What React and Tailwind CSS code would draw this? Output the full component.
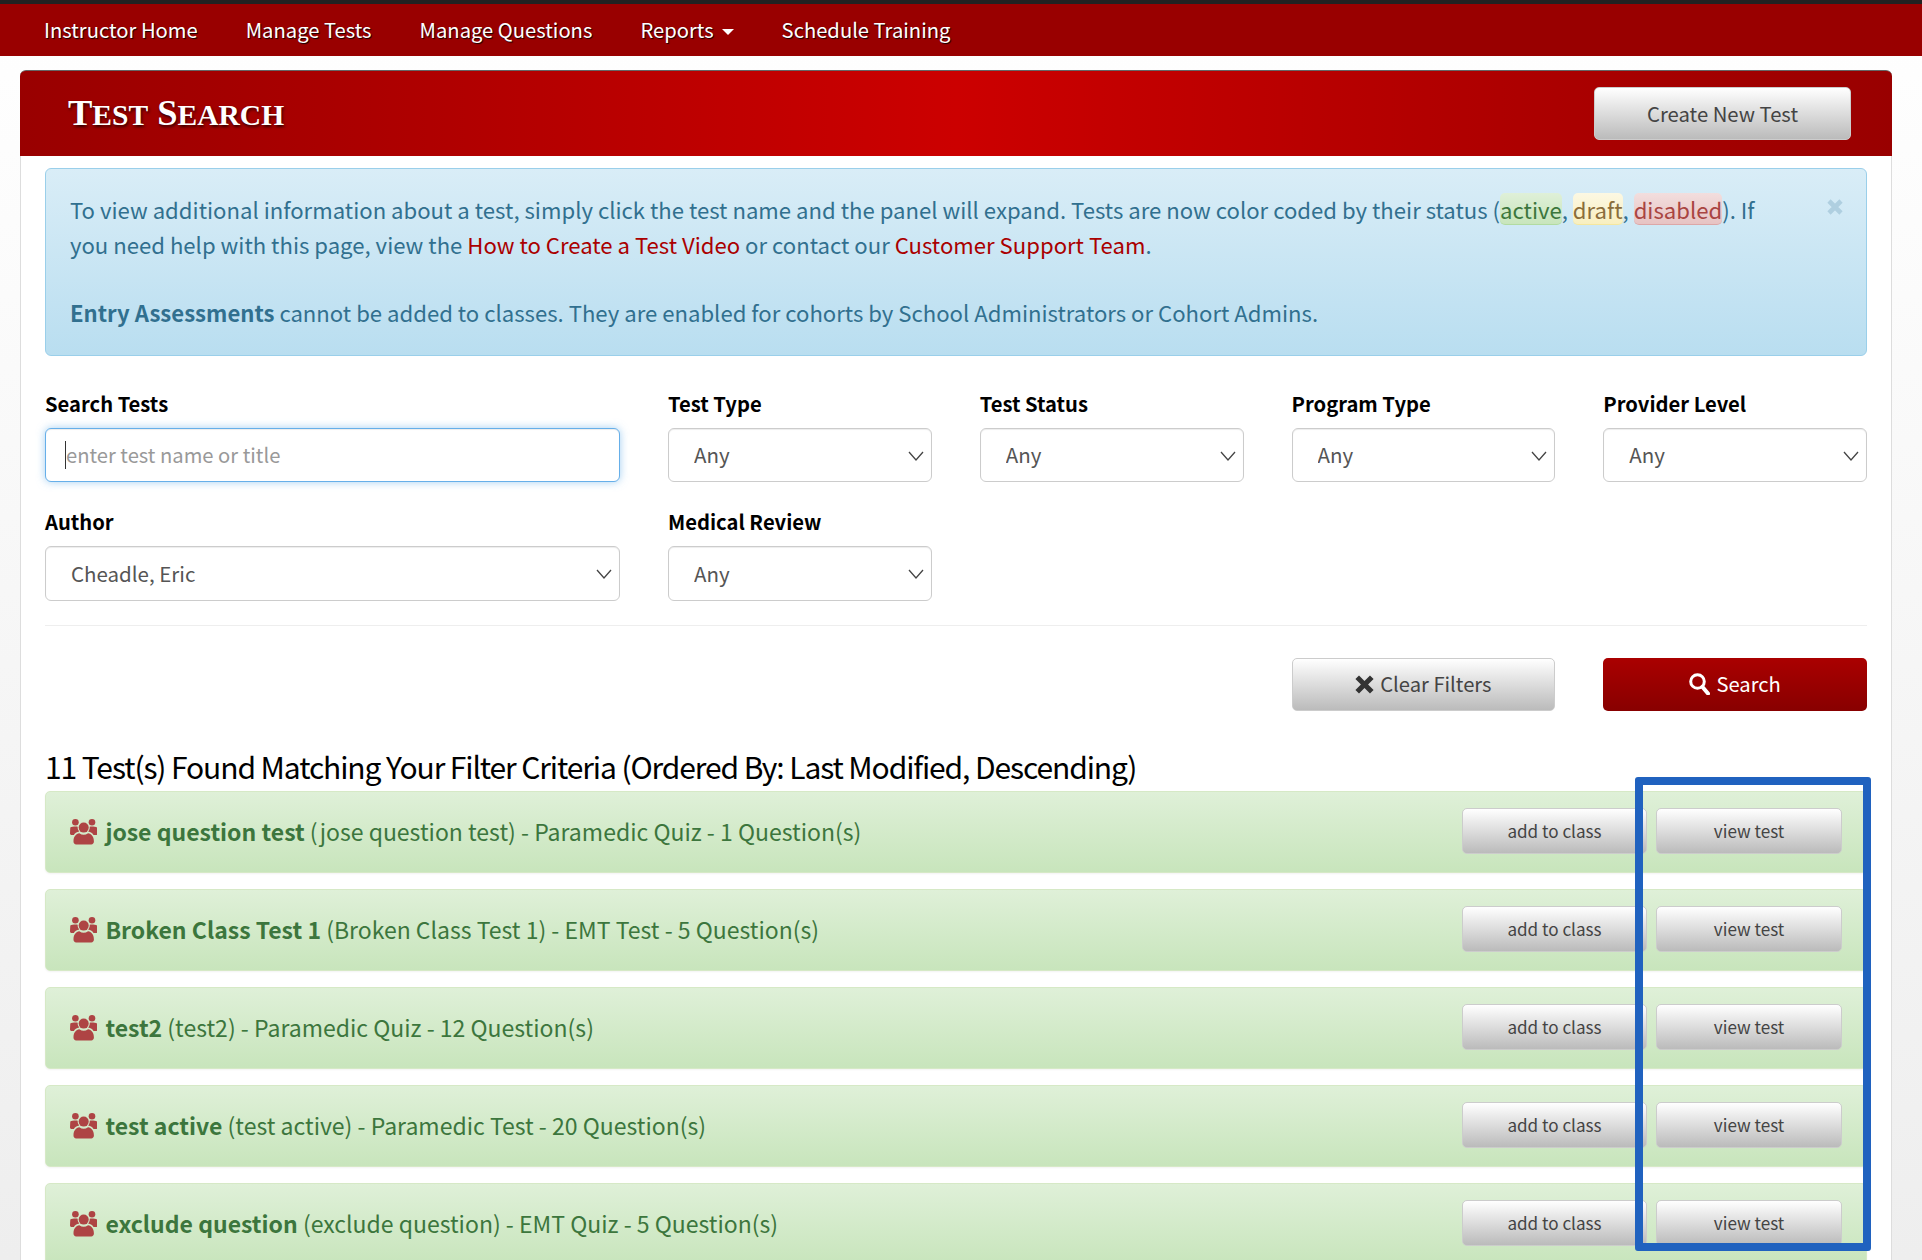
const Chevron = () => (
  <svg viewBox="0 0 16 10" className="absolute right-[8px] top-[23px] h-[10px] w-[16px] pointer-events-none" fill="none" stroke="#444" strokeWidth="1.3">
    <path d="M1 1l7 8 7-8" />
  </svg>
);

const Users = () => (
  <svg viewBox="0 0 27.4 25.4" className="h-[25.4px] w-[27.4px] shrink-0" fill="#ae4444">
    <circle cx="5.4" cy="3.3" r="3.3" />
    <circle cx="22" cy="3.3" r="3.3" />
    <circle cx="13.7" cy="8.6" r="5" />
    <path d="M0.3 8.6c1.4-1.2 7-1.3 7.4-.8-.2 2 .6 3.6 1.6 4.8-2.6.5-4.6 1.6-5.4 3.4H1.3C.3 15.8 0 15 0 14z" />
    <path d="M27.1 8.6c-1.4-1.2-7-1.3-7.4-.8.2 2-.6 3.6-1.6 4.8 2.6.5 4.6 1.6 5.4 3.4h2.6c1 0 1.3-.8 1.3-1.8z" />
    <path d="M3.5 22.2c0-4.6 2.6-7.6 5.8-8 1.5 1 2.9 1.5 4.4 1.5s2.9-.5 4.4-1.5c3.2.4 5.8 3.4 5.8 8v.6c0 1.5-1.1 2.6-2.6 2.6H6.1c-1.5 0-2.6-1.1-2.6-2.6z" />
  </svg>
);

const SelectField = ({ label, value = "Any", tall = false }) => (
  <div>
    <label className="block h-[37px] text-[20.2px] leading-[26px] font-bold text-black">{label}</label>
    <div className={`relative ${tall ? "h-[55px]" : "h-[54px]"}`}>
      <select
        defaultValue={value}
        className="h-full w-full appearance-none rounded-[6px] border border-[#ccc] bg-white pb-[2px] pl-[25px] text-[20.5px] leading-[28px] text-[#555] shadow-[inset_0_1px_1px_rgba(0,0,0,0.075)]"
      >
        <option>{value}</option>
      </select>
      <Chevron />
    </div>
  </div>
);

const rows = [
  ["jose question test", "(jose question test) - Paramedic Quiz - 1 Question(s)"],
  ["Broken Class Test 1", "(Broken Class Test 1) - EMT Test - 5 Question(s)"],
  ["test2", "(test2) - Paramedic Quiz - 12 Question(s)"],
  ["test active", "(test active) - Paramedic Test - 20 Question(s)"],
  ["exclude question", "(exclude question) - EMT Quiz - 5 Question(s)"],
];

const grayBtn = "rounded-[5px] border border-[#ccc] bg-linear-to-b from-white to-[#bbb] text-[#444]";
const navItems = ["Instructor Home", "Manage Tests", "Manage Questions"];

export default function App() {
  return (
    <div className="relative h-[1260px] overflow-hidden bg-linear-to-b from-white to-[#eee] font-['Noto_Sans_CJK_SC',sans-serif]">
      <nav className="flex h-[56px] items-center gap-[48px] border-t-4 border-[#222] bg-[#990000] pl-[44px] text-[20.2px] leading-[30px] text-white [text-shadow:1px_1px_1px_rgba(0,0,0,0.9)]">
        {navItems.map((n) => (
          <a key={n}>{n}</a>
        ))}
        <a className="flex items-center gap-[8px]">
          Reports
          <span className="mt-[3px] h-0 w-0 border-x-[6px] border-t-[6px] border-x-transparent border-t-white" />
        </a>
        <a>Schedule Training</a>
      </nav>

      <div className="ml-[20px] mt-[14px] w-[1872px]">
        <header className="flex h-[86px] items-center justify-between rounded-t-[6px] border-t border-[#666] bg-linear-to-r from-[#900] via-[#c00] to-[#900] pl-[48px] pr-[41px]">
          <h1 className="font-['Liberation_Serif',serif] text-[36.5px] leading-[44px] font-bold text-white [text-shadow:1px_2px_3px_rgba(0,0,0,0.7)]">
            T<span className="text-[29.5px] uppercase">est</span> S<span className="text-[29.5px] uppercase">earch</span>
          </h1>
          <button className={`h-[53px] w-[257px] text-[20.3px] ${grayBtn}`}>Create New Test</button>
        </header>

        <div className="border-x border-[#ddd] bg-white px-[24px] pt-[12px]">
          <div className="relative h-[188px] rounded-[6px] border border-[#9acfea] bg-linear-to-b from-[#d9edf7] to-[#b9def0] pl-[24px] pr-[80px] pt-[24px] text-[22.13px] leading-[33.7px] text-[#31708f]">
            <p>
              To view additional information about a test, simply click the test name and the panel will expand. Tests are now color coded by their status (
              <span className="mb-[3px] inline-block h-[32px] rounded-[5px] border-b border-[#b2dba1] bg-linear-to-b from-[#dff0d8] to-[#c8e5bc] leading-[32px] text-[#3c763d]">active</span>,{" "}
              <span className="mb-[3px] inline-block h-[32px] rounded-[5px] border-b border-[#f5e79e] bg-linear-to-b from-[#fcf8e3] to-[#f8efc0] leading-[32px] text-[#8a6d3b]">draft</span>,{" "}
              <span className="mb-[3px] inline-block h-[32px] rounded-[5px] border-b border-[#dca7a7] bg-linear-to-b from-[#f2dede] to-[#e7c3c3] leading-[32px] text-[#a94442]">disabled</span>). If you need help with this page, view the{" "}
              <a className="text-[#a00]">How to Create a Test Video</a> or contact our <a className="text-[#a00]">Customer Support Team</a>.
            </p>
            <p className="mt-[34.7px]">
              <b>Entry Assessments</b> cannot be added to classes. They are enabled for cohorts by School Administrators or Cohort Admins.
            </p>
            <svg viewBox="0 0 16 16" className="absolute right-[23px] top-[30px] h-[16px] w-[16px]" fill="none" stroke="#afcfe0" strokeWidth="4.6">
              <path d="M2 2l12 12M14 2L2 14" />
            </svg>
          </div>

          <div className="mt-[35px] grid grid-cols-[575px_repeat(4,1fr)] gap-x-[48px] gap-y-[27px]">
            <div>
              <label className="block h-[37px] text-[20.2px] leading-[26px] font-bold text-black">Search Tests</label>
              <div className="relative h-[54px]">
                <input
                  placeholder="enter test name or title"
                  className="h-full w-full rounded-[6px] border border-[#66afe9] bg-white pb-[2px] pl-[20px] text-[20.2px] shadow-[inset_0_1px_1px_rgba(0,0,0,0.075),0_0_8px_rgba(102,175,233,0.6)] outline-none placeholder:text-[#999]"
                />
                <span className="absolute left-[20px] top-[13px] h-[28px] w-px bg-[#333]" />
              </div>
            </div>
            <SelectField label="Test Type" />
            <SelectField label="Test Status" />
            <SelectField label="Program Type" />
            <SelectField label="Provider Level" />
            <SelectField label="Author" value="Cheadle, Eric" tall />
            <SelectField label="Medical Review" tall />
          </div>

          <hr className="mt-[24px] border-t border-[#eee]" />

          <div className="mt-[32px] grid grid-cols-[575px_repeat(4,1fr)] gap-x-[48px]">
            <button className={`col-start-4 flex h-[53px] items-center justify-center gap-[6px] pb-[1px] text-[20.2px] ${grayBtn}`}>
              <svg viewBox="0 0 18 18" className="h-[19px] w-[19px]" fill="#333">
                <path d="M3.8 0.4L9 5.6 14.2.4 17.6 3.8 12.4 9l5.2 5.2-3.4 3.4L9 12.4l-5.2 5.2-3.4-3.4L5.6 9 .4 3.8z" />
              </svg>
              Clear Filters
            </button>
            <button className="flex h-[53px] items-center justify-center gap-[6px] rounded-[5px] bg-linear-to-b from-[#a00] to-[#800] pb-[1px] text-[20.2px] text-white">
              <svg viewBox="0 0 21 22" className="h-[22px] w-[21px]" fill="none" stroke="#fff">
                <circle cx="8.5" cy="8.5" r="6.8" strokeWidth="3" />
                <path d="M13.5 14l5.5 6.5" strokeWidth="4" strokeLinecap="round" />
              </svg>
              Search
            </button>
          </div>

          <h2 className="mt-[35px] mb-[5px] text-[30px] leading-[40px] tracking-[-1.1px] text-black">
            11 Test(s) Found Matching Your Filter Criteria (Ordered By: Last Modified, Descending)
          </h2>

          <div className="flex flex-col gap-[16px]">
            {rows.map(([t, d]) => (
              <div
                key={t}
                className="flex h-[82px] shrink-0 items-center rounded-[5px] border border-[#d6e9c6] bg-linear-to-b from-[#dff0d8] to-[#c8e5bc] pl-[24px] pr-[24px] text-[23.03px] text-[#3c763d] shadow-[0_1px_2px_rgba(0,0,0,0.05)]"
              >
                <Users />
                <p className="mb-[2px] ml-[8px] flex-1 leading-[32px]">
                  <b>{t}</b> {d}
                </p>
                <button className={`mb-[2px] h-[46px] w-[185px] text-[17.1px] ${grayBtn}`}>add to class</button>
                <button className={`mb-[2px] ml-[9px] h-[46px] w-[186px] text-[17.1px] ${grayBtn}`}>view test</button>
              </div>
            ))}
          </div>
        </div>
      </div>

      <div className="absolute left-[1635px] top-[777px] h-[474px] w-[236px] rounded-[3px] border-[8px] border-[#2062bf]" />
    </div>
  );
}
